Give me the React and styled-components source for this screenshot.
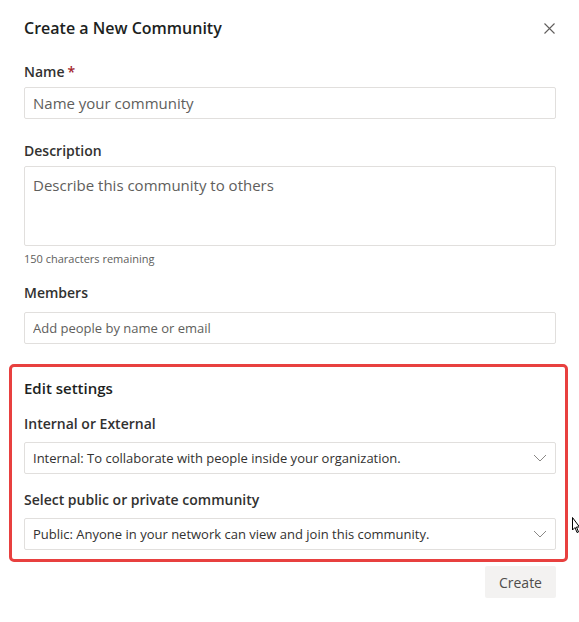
import React from 'react'
import styled, { createGlobalStyle } from 'styled-components'

const GlobalStyle = createGlobalStyle`
body {
    margin: 0;
    background: #ffffff;
    font-family: "Segoe UI", "Open Sans", "Noto Sans", sans-serif;
    color: #323130;
}
* {
    box-sizing: border-box;
}
`

const Dialog = styled.div`
position: relative;
width: 579px;
height: 622px;
padding: 16px 23px 0 24px;
display: flex;
flex-direction: column;
overflow: hidden;
`

const Header = styled.div`
display: flex;
justify-content: space-between;
align-items: center;
height: 24px;
`

const Title = styled.h1`
margin: 0;
font-size: 16px;
font-weight: 600;
color: #201f1e;
`

const CloseButton = styled.button`
border: none;
background: none;
padding: 0;
width: 12px;
height: 12px;
margin-right: 1px;
display: flex;
align-items: center;
justify-content: center;
cursor: pointer;
`

const Field = styled.div`
display: flex;
flex-direction: column;
margin-top: ${props => props.top}px;
`

const Label = styled.label`
font-size: 14px;
font-weight: 600;
line-height: 20px;
color: #323130;
margin-bottom: ${props => props.gap || 6}px;
`

const Required = styled.span`
color: #a4262c;
margin-left: 3px;
`

const Input = styled.input`
width: 100%;
height: 32px;
padding: 0 8px;
border: 1px solid #e1dfdd;
border-radius: 2px;
font-family: inherit;
font-size: ${props => props.large ? 15 : 13}px;
color: #323130;
outline: none;
&::placeholder {
    color: #605e5c;
}
`

const TextArea = styled.textarea`
width: 100%;
height: 80px;
padding: 8px 8px;
border: 1px solid #e1dfdd;
border-radius: 2px;
font-family: inherit;
font-size: 15px;
resize: none;
outline: none;
&::placeholder {
    color: #605e5c;
}
`

const HelpText = styled.div`
font-size: 11px;
line-height: 16px;
color: #605e5c;
margin-top: 5px;
`

const SettingsBox = styled.section`
margin: 20px -12px 0 -15px;
border: 3px solid #e8403f;
border-radius: 5px;
padding: 10px 9px 9px 12px;
display: flex;
flex-direction: column;
`

const SectionTitle = styled.h2`
margin: 0;
font-size: 15px;
font-weight: 600;
line-height: 22px;
color: #201f1e;
`

const Select = styled.div`
height: 32px;
border: 1px solid #e1dfdd;
border-radius: 2px;
padding: 0 8px 0 8px;
display: flex;
align-items: center;
justify-content: space-between;
font-size: 13px;
color: #323130;
`

const Footer = styled.div`
display: flex;
justify-content: flex-end;
margin-top: 4px;
`

const Button = styled.button`
height: 32px;
min-width: 69px;
padding: 0 14px;
border: none;
border-radius: 2px;
background: #f3f2f1;
color: #4f4d4b;
font-family: inherit;
font-size: 14px;
font-weight: 500;
`

const Pointer = styled.svg`
position: absolute;
left: 572px;
top: 517px;
`

const Chevron = () => (
    <svg width="14" height="8" viewBox="0 0 14 8">
        <path d="M1 1 L7 7 L13 1" fill="none" stroke="#8a8886" strokeWidth="1" />
    </svg>
)

const App = () => {
    return (
        <>
            <GlobalStyle />
            <Dialog>
                <Header>
                    <Title>Create a New Community</Title>
                    <CloseButton aria-label='Close'>
                        <svg width="11" height="11" viewBox="0 0 11 11">
                            <path d="M0.5 0.5 L10.5 10.5 M10.5 0.5 L0.5 10.5" stroke="#605e5c" strokeWidth="1.1" />
                        </svg>
                    </CloseButton>
                </Header>
                <Field top={22}>
                    <Label gap={5}>Name<Required>*</Required></Label>
                    <Input large placeholder='Name your community' />
                </Field>
                <Field top={22}>
                    <Label gap={5}>Description</Label>
                    <TextArea placeholder='Describe this community to others' />
                    <HelpText>150 characters remaining</HelpText>
                </Field>
                <Field top={16}>
                    <Label gap={9}>Members</Label>
                    <Input placeholder='Add people by name or email' />
                </Field>
                <SettingsBox>
                    <SectionTitle>Edit settings</SectionTitle>
                    <Field top={15}>
                        <Label gap={8}>Internal or External</Label>
                        <Select>
                            Internal: To collaborate with people inside your organization.
                            <Chevron />
                        </Select>
                    </Field>
                    <Field top={16}>
                        <Label gap={8}>Select public or private community</Label>
                        <Select>
                            Public: Anyone in your network can view and join this community.
                            <Chevron />
                        </Select>
                    </Field>
                </SettingsBox>
                <Footer>
                    <Button>Create</Button>
                </Footer>
                <Pointer width="8" height="18" viewBox="0 0 8 18">
                    <path d="M0.5 0.5 L0.5 13 L3 10.5 L5 15.5 L6.5 15 L4.5 10 L7.5 10 Z" fill="#ffffff" stroke="#000000" strokeWidth="1" />
                </Pointer>
            </Dialog>
        </>
    )
}

export default App
